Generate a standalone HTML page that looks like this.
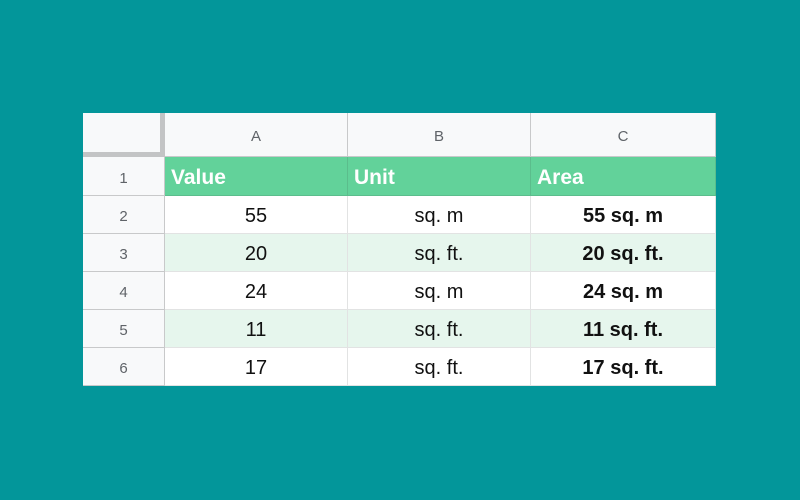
<!DOCTYPE html><html><head><style>
body{margin:0;width:800px;height:500px;background:#03969a;position:relative;overflow:hidden;font-family:"Liberation Sans",sans-serif}
.c{position:absolute;box-sizing:border-box;border-right:1px solid #e2e3e3;border-bottom:1px solid #e2e3e3;display:flex;align-items:center;justify-content:center;font-size:20px;color:#111;padding-top:4px}
.h{background:#f8f9fa;color:#5f6368;font-size:15px;border-color:#c8c9ca}
.g{background:#62d29a;color:#fff;font-weight:bold;justify-content:flex-start;padding-left:6px;font-size:21px;border-color:#5bbd8c}
.l{background:#e6f6ed}
.b{font-weight:bold}
</style></head><body>
<div style="position:absolute;left:83px;top:113px;width:633px;height:273px;background:#fff"></div>
<div class="c h" style="left:83px;top:113px;width:82px;height:44px;border-right:5px solid #c3c4c5;border-bottom:5px solid #c3c4c5"></div>
<div class="c h" style="left:165px;top:113px;width:183px;height:44px">A</div>
<div class="c h" style="left:348px;top:113px;width:183px;height:44px">B</div>
<div class="c h" style="left:531px;top:113px;width:185px;height:44px">C</div>

<div class="c h" style="left:83px;top:157px;width:82px;height:39px">1</div>
<div class="c g" style="left:165px;top:157px;width:183px;height:39px">Value</div>
<div class="c g" style="left:348px;top:157px;width:183px;height:39px">Unit</div>
<div class="c g" style="left:531px;top:157px;width:185px;height:39px">Area</div>

<div class="c h" style="left:83px;top:196px;width:82px;height:38px">2</div>
<div class="c" style="left:165px;top:196px;width:183px;height:38px">55</div>
<div class="c" style="left:348px;top:196px;width:183px;height:38px">sq. m</div>
<div class="c b" style="left:531px;top:196px;width:185px;height:38px">55 sq. m</div>

<div class="c h" style="left:83px;top:234px;width:82px;height:38px">3</div>
<div class="c l" style="left:165px;top:234px;width:183px;height:38px">20</div>
<div class="c l" style="left:348px;top:234px;width:183px;height:38px">sq. ft.</div>
<div class="c l b" style="left:531px;top:234px;width:185px;height:38px">20 sq. ft.</div>

<div class="c h" style="left:83px;top:272px;width:82px;height:38px">4</div>
<div class="c" style="left:165px;top:272px;width:183px;height:38px">24</div>
<div class="c" style="left:348px;top:272px;width:183px;height:38px">sq. m</div>
<div class="c b" style="left:531px;top:272px;width:185px;height:38px">24 sq. m</div>

<div class="c h" style="left:83px;top:310px;width:82px;height:38px">5</div>
<div class="c l" style="left:165px;top:310px;width:183px;height:38px">11</div>
<div class="c l" style="left:348px;top:310px;width:183px;height:38px">sq. ft.</div>
<div class="c l b" style="left:531px;top:310px;width:185px;height:38px">11 sq. ft.</div>

<div class="c h" style="left:83px;top:348px;width:82px;height:38px">6</div>
<div class="c" style="left:165px;top:348px;width:183px;height:38px">17</div>
<div class="c" style="left:348px;top:348px;width:183px;height:38px">sq. ft.</div>
<div class="c b" style="left:531px;top:348px;width:185px;height:38px">17 sq. ft.</div>
</body></html>
